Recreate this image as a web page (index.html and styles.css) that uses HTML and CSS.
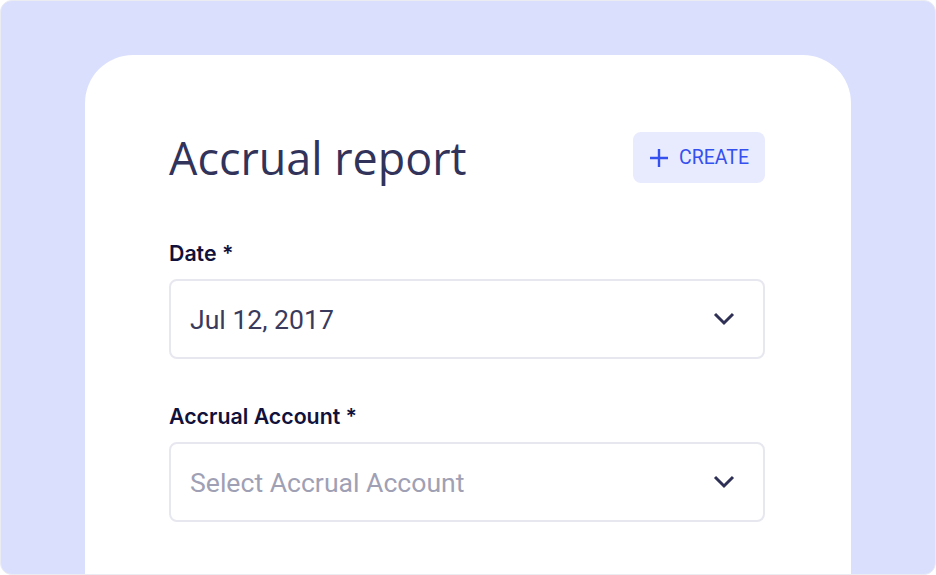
FILE: index.html
```html
<!DOCTYPE html>
<html>
<head>
<meta charset="utf-8">
<link rel="stylesheet" href="styles.css">
</head>
<body>
<div class="frame">
  <div class="card">
    <div class="header">
      <h1 class="title">Accrual report</h1>
      <button class="create">
        <svg class="plus" width="20" height="20" viewBox="0 0 20 20"><path d="M10 1v18M1 10h18" stroke="currentColor" stroke-width="2.4" fill="none"/></svg>
        <span>CREATE</span>
      </button>
    </div>
    <div class="field">
      <div class="label">Date *</div>
      <div class="select">
        <span class="value">Jul 12, 2017</span>
        <svg class="chev" width="22" height="14" viewBox="0 0 22 14"><path d="M2 2l9 9 9-9" stroke="currentColor" stroke-width="3" fill="none"/></svg>
      </div>
    </div>
    <div class="field second">
      <div class="label">Accrual Account *</div>
      <div class="select">
        <span class="value placeholder">Select Accrual Account</span>
        <svg class="chev" width="22" height="14" viewBox="0 0 22 14"><path d="M2 2l9 9 9-9" stroke="currentColor" stroke-width="3" fill="none"/></svg>
      </div>
    </div>
  </div>
</div>
</body>
</html>
```

FILE: styles.css
```css
* { box-sizing: border-box; }
html, body { margin: 0; padding: 0; background: #ffffff; }
.frame {
  width: 936px;
  height: 575px;
  border: 1px solid #ebebf2;
  border-radius: 12px;
  background: #dadffe;
  overflow: hidden;
  padding: 54px 0 0 84px;
}
.card {
  width: 766px;
  height: 100%;
  background: #ffffff;
  border-radius: 48px 48px 0 0;
  padding: 77px 86px 0 84px;
}
.header {
  display: flex;
  justify-content: space-between;
  align-items: center;
  height: 51px;
}
.title {
  margin: 0;
  font-family: "Open Sans", sans-serif;
  font-weight: 400;
  font-size: 44.9px;
  line-height: 51px;
  color: #32335a;
}
.create {
  display: flex;
  align-items: center;
  gap: 10px;
  height: 51px;
  width: 132px;
  padding: 0 0 0 16px;
  border: none;
  border-radius: 8px;
  background: #e8ebfe;
  color: #3450ef;
  font-family: "Roboto", sans-serif;
  font-size: 19.5px;
  font-weight: 400;
}
.field { margin-top: 56px; }
.field.second { margin-top: 43px; }
.label {
  font-family: "Inter", sans-serif;
  font-weight: 600;
  font-size: 21.3px;
  line-height: 28px;
  color: #11113c;
  margin-bottom: 12px;
}
.select {
  display: flex;
  align-items: center;
  justify-content: space-between;
  height: 80px;
  border: 2px solid #e7e7ef;
  border-radius: 8px;
  padding: 0 28px 0 19px;
}
.value {
  font-family: "Roboto", sans-serif;
  font-size: 26.6px;
  color: #3a3a5c;
}
.value.placeholder { color: #a0a0b4; }
.chev { color: #2f3056; }
```
